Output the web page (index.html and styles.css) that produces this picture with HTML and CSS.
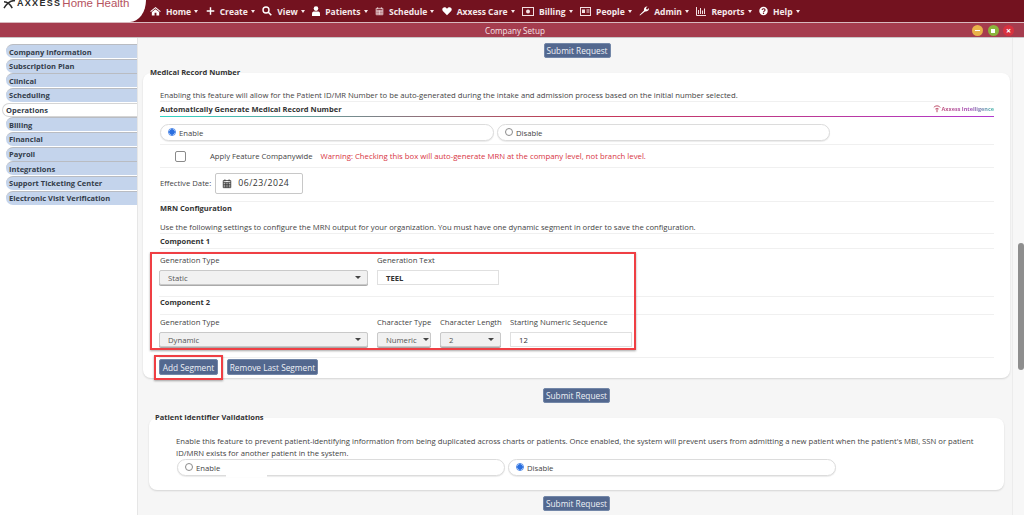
FILE: index.html
```html
<!DOCTYPE html>
<html lang="en">
<head>
<meta charset="utf-8">
<title>Company Setup</title>
<link rel="stylesheet" href="styles.css">
</head>
<body>
<svg class="defs" width="0" height="0" aria-hidden="true">
  <symbol id="i-cal" viewBox="0 0 12 12"><path d="M1.500 2.500h9v8.500h-9z M1.500 5h9 M3.500 1v2.500 M8.500 1v2.500 M4 5v6 M6 5v6 M8 5v6 M1.500 7h9 M1.500 9h9" fill="none" stroke="currentColor" stroke-width="1"/></symbol>
</svg>
<header class="topbar">
  <div class="logo">
    <svg class="logo-mark" viewBox="0 0 16 12" width="15" height="11"><path d="M14 2C9 1 5 5 2 10M2 3c4 0 7 3 9 7" fill="none" stroke="#2b2b2b" stroke-width="1.600"/></svg>
    <span class="logo-axxess">AXXESS</span><span class="logo-hh">Home Health</span>
  </div>
  <nav class="menu">
    <a class="menu-item"><svg viewBox="0 0 12 10" width="11" height="10"><path d="M6 .5L.3 5.300l.7.7L6 2l5 4 .7-.7zM2 6.200V10h3V7h2v3h3V6.200L6 3z" fill="#fff"/></svg>Home<i class="caret"></i></a>
    <a class="menu-item"><svg viewBox="0 0 10 10" width="9" height="10"><path d="M5 .8v8.400M.8 5h8.400" stroke="#fff" stroke-width="1.600"/></svg>Create<i class="caret"></i></a>
    <a class="menu-item"><svg viewBox="0 0 10 10" width="10" height="10"><circle cx="4" cy="4" r="3" fill="none" stroke="#fff" stroke-width="1.400"/><path d="M6.300 6.300l3 3" stroke="#fff" stroke-width="1.600"/></svg>View<i class="caret"></i></a>
    <a class="menu-item"><svg viewBox="0 0 8 10" width="8" height="10"><circle cx="4" cy="2.600" r="2.300" fill="#fff"/><path d="M0 10V7.400C0 6 1.200 5.400 2.200 5.400h3.600C6.800 5.400 8 6 8 7.400V10z" fill="#fff"/></svg>Patients<i class="caret"></i></a>
    <a class="menu-item"><svg class="ic-light" width="9" height="10"><use href="#i-cal"/></svg>Schedule<i class="caret"></i></a>
    <a class="menu-item"><svg viewBox="0 0 12 10" width="10" height="10"><path d="M6 10L1 5C-.5 3 .8.5 3 .5 4.400.5 5.400 1.300 6 2.200 6.600 1.300 7.600.5 9 .5c2.200 0 3.500 2.500 2 4.500z" fill="#fff"/></svg>Axxess Care<i class="caret"></i></a>
    <a class="menu-item"><svg viewBox="0 0 12 9" width="12" height="9"><rect x=".5" y=".5" width="11" height="8" fill="none" stroke="#f3dfe2"/><circle cx="6" cy="4.500" r="2" fill="#f3dfe2"/></svg>Billing<i class="caret"></i></a>
    <a class="menu-item"><svg viewBox="0 0 11 9" width="11" height="9"><rect x=".5" y=".5" width="10" height="8" fill="none" stroke="#f3dfe2"/><rect x="2" y="2.500" width="3" height="3.500" fill="#f3dfe2"/><path d="M6.500 3h3M6.500 5h3" stroke="#f3dfe2"/></svg>People<i class="caret"></i></a>
    <a class="menu-item"><svg viewBox="0 0 10 10" width="10" height="10"><path d="M1 9.500L.5 9 5 4.500C4.500 2.500 6 .2 8.500.5L7 2l.3 1.200L8.500 3.500 10 2c.3 2.500-2 4-4 3.500z" fill="#fff"/></svg>Admin<i class="caret"></i></a>
    <a class="menu-item"><svg viewBox="0 0 10 9" width="10" height="9"><path d="M.5 0v8.500H10" fill="none" stroke="#f3dfe2"/><path d="M2.500 3v4M4.500 1v6M6.500 3.500V7M8.500 1.500V7" stroke="#f3dfe2"/></svg>Reports<i class="caret"></i></a>
    <a class="menu-item"><svg viewBox="0 0 10 10" width="9" height="10"><circle cx="5" cy="5" r="4.700" fill="#fff"/><path d="M3.400 4c0-2.100 3.300-2.100 3.300-.1 0 1.200-1.700 1.200-1.700 2.400" fill="none" stroke="#73121f" stroke-width="1.200"/><rect x="4.300" y="7" width="1.400" height="1.300" fill="#73121f"/></svg>Help<i class="caret"></i></a>
  </nav>
</header>
<div class="titlebar">
  <span class="title">Company Setup</span>
  <div class="win-btns">
    <span class="win win-min"><i class="g-min"></i></span>
    <span class="win win-max"><i class="g-max"></i></span>
    <span class="win win-close">×</span>
  </div>
</div>
<div class="workspace">
  <aside class="sidebar">
    <a class="tab">Company Information</a>
    <a class="tab">Subscription Plan</a>
    <a class="tab">Clinical</a>
    <a class="tab">Scheduling</a>
    <a class="tab tab-active">Operations</a>
    <a class="tab">Billing</a>
    <a class="tab">Financial</a>
    <a class="tab">Payroll</a>
    <a class="tab">Integrations</a>
    <a class="tab">Support Ticketing Center</a>
    <a class="tab">Electronic Visit Verification</a>
  </aside>
  <main class="content">
    <div class="submit-row submit-first"><button class="btn btn-submit">Submit Request</button></div>

    <section class="card card-mrn">
      <h2 class="card-title">Medical Record Number</h2>
      <p class="text t-intro">Enabling this feature will allow for the Patient ID/MR Number to be auto-generated during the intake and admission process based on the initial number selected.</p>
      <div class="ai-row">
        <strong class="heading">Automatically Generate Medical Record Number</strong>
        <span class="ai-brand"><svg viewBox="0 0 10 10" width="8" height="8"><path d="M1 3c2-2.500 6-2.500 8 0M3 5c1.500-1 3-1 4 0M5 5v4" fill="none" stroke="#b9405d" stroke-width="1.200"/></svg>Axxess Intelligence</span>
      </div>
      <div class="radio-row">
        <label class="pill pill-a"><i class="radio radio-on"></i>Enable</label>
        <label class="pill pill-b"><i class="radio"></i>Disable</label>
      </div>
      <div class="apply-row">
        <i class="check"></i>
        <span class="text apply-label">Apply Feature Companywide</span>
        <span class="warning">Warning: Checking this box will auto-generate MRN at the company level, not branch level.</span>
      </div>
      <div class="date-row">
        <span class="text">Effective Date:</span>
        <div class="date-input"><svg width="10" height="11"><use href="#i-cal"/></svg>06/23/2024</div>
      </div>
      <strong class="heading h-config">MRN Configuration</strong>
      <p class="text t-config">Use the following settings to configure the MRN output for your organization. You must have one dynamic segment in order to save the configuration.</p>
      <strong class="heading h-comp1">Component 1</strong>
      <div class="fields fields-1">
        <div class="field f-type"><span class="text">Generation Type</span><div class="select"><span>Static</span><i class="sel-caret"></i></div></div>
        <div class="field f-gentext"><span class="text">Generation Text</span><div class="input input-bold">TEEL</div></div>
      </div>
      <strong class="heading h-comp2">Component 2</strong>
      <div class="fields fields-2">
        <div class="field f-type"><span class="text">Generation Type</span><div class="select"><span>Dynamic</span><i class="sel-caret"></i></div></div>
        <div class="field f-chartype"><span class="text">Character Type</span><div class="select sel-tight"><span>Numeric</span><i class="sel-caret"></i></div></div>
        <div class="field f-charlen"><span class="text">Character Length</span><div class="select"><span>2</span><i class="sel-caret"></i></div></div>
        <div class="field f-seq"><span class="text">Starting Numeric Sequence</span><div class="input">12</div></div>
      </div>
      <div class="seg-row">
        <button class="btn btn-add">Add Segment</button>
        <button class="btn btn-remove">Remove Last Segment</button>
      </div>
      <div class="mark mark-fields"></div>
      <div class="mark mark-add"></div>
    </section>

    <div class="submit-row submit-mid"><button class="btn btn-submit">Submit Request</button></div>

    <section class="card card-piv">
      <h2 class="card-title">Patient Identifier Validations</h2>
      <p class="text t-piv">Enable this feature to prevent patient-identifying information from being duplicated across charts or patients. Once enabled, the system will prevent users from admitting a new patient when the patient's MBI, SSN or patient ID/MRN exists for another patient in the system.</p>
      <div class="radio-row">
        <label class="pill pill-a"><i class="radio"></i>Enable<span class="pill-gap"></span></label>
        <label class="pill pill-b"><i class="radio radio-on"></i>Disable</label>
      </div>
    </section>

    <div class="submit-row submit-last"><button class="btn btn-submit">Submit Request</button></div>
  </main>
  <div class="scrollbar"><div class="thumb"></div></div>
</div>
</body>
</html>
```
FILE: styles.css
```css
* { box-sizing: border-box; }
html, body { height: 100%; }
body {
  margin: 0;
  height: 515px;
  overflow: hidden;
  display: flex;
  flex-direction: column;
  background: #fff;
  color: #3a3a3a;
  font-family: "Open Sans", "Liberation Sans", sans-serif;
  font-size: 7.700px;
}
.defs { position: absolute; }
.topbar {
  height: 23px;
  flex: none;
  display: flex;
  background: #73121f;
  border-bottom: 1px solid #d9b9be;
}
.logo {
  width: 146px;
  height: 22px;
  padding-left: 2px;
  display: flex;
  align-items: flex-start;
  background: #fff;
  border-bottom-right-radius: 16px 22px;
}
.logo-mark { margin-top: -1px; }
.logo-axxess {
  font-family: "Liberation Sans", sans-serif;
  font-weight: 700;
  font-size: 9px;
  letter-spacing: 1.300px;
  color: #2b2b2b;
  line-height: 6px;
  margin-right: 1px;
}
.logo-hh {
  font-family: "Liberation Sans", sans-serif;
  font-size: 11.500px;
  line-height: 7px;
  color: #b5535f;
}
.menu {
  display: flex;
  align-items: center;
  padding-left: 4px;
  height: 22px;
  gap: 7.500px;
}
.menu-item {
  display: flex;
  align-items: center;
  gap: 5px;
  color: #f6e9eb;
  font-weight: 700;
  font-size: 8.500px;
}
.ic-light { color: #f3dfe2; }
.caret {
  width: 0;
  height: 0;
  margin-left: -2px;
  border: 2.500px solid transparent;
  border-top: 3px solid #f6e9eb;
  border-bottom: 0;
}
.titlebar {
  height: 15px;
  flex: none;
  position: relative;
  display: flex;
  align-items: center;
  justify-content: center;
  padding-left: 6px;
  background: #a53c4e;
  color: #f6e6e8;
  font-size: 8.100px;
  border-bottom: 1px solid #c9c5c6;
}
.win-btns {
  position: absolute;
  right: 10px;
  top: 2px;
  display: flex;
  gap: 4.500px;
}
.win {
  width: 11px;
  height: 11px;
  border-radius: 50%;
  display: flex;
  align-items: center;
  justify-content: center;
  color: #fff;
  font-size: 9px;
  font-weight: 700;
  line-height: 1;
}
.win-min { background: #e9b34a; }
.win-max { background: #8bb43c; }
.win-close { background: #d8323f; }
.g-min { width: 5px; height: 1px; background: #fff; }
.g-max { width: 4px; height: 4px; background: #fff; }
.workspace { flex: 1; min-height: 0; display: flex; }
.sidebar {
  width: 138px;
  flex: none;
  padding: 6px 0 0 2px;
  display: flex;
  flex-direction: column;
  gap: 0.670px;
  background: #fff;
  border-right: 1px solid #e6e6e6;
}
.tab {
  height: 14px;
  margin-left: 4px;
  padding-left: 3px;
  display: flex;
  align-items: center;
  background: #c4d4ec;
  border-radius: 7px 0 0 7px;
  border-top: 1px solid #b9bcc2;
  color: #333c4a;
  font-weight: 700;
  font-size: 7.500px;
  white-space: nowrap;
}
.tab-active {
  margin-left: 0;
  padding-left: 3px;
  background: #fff;
  border: 1px solid #d5d5d5;
  border-right: 0;
  color: #333c4a;
}
.content {
  flex: 1;
  min-width: 0;
  height: 477px;
  overflow: hidden;
  padding: 5px 0 0 5px;
  background: #f6f6f6;
}
.submit-row { display: flex; justify-content: center; }
.submit-first { padding-right: 1px; height: 30px; }
.submit-mid { margin-top: 10px; height: 30px; padding-right: 2px; }
.submit-last { margin-top: 6px; padding-right: 2px; }
.btn {
  height: 15px;
  padding: 0 4px;
  font: inherit;
  font-size: 8.300px;
  color: #eef1f6;
  background: #53688f;
  border: 1px solid #7387a8;
  border-radius: 2px;
  white-space: nowrap;
}
.btn-submit { width: 67px; padding: 0; }
.card {
  position: relative;
  background: #fff;
  border-radius: 8px;
  box-shadow: 0 1px 2px rgba(0, 0, 0, .14);
}
.card-mrn {
  width: 867px;
  height: 305px;
  padding: 17px 16px 0 17px;
}
.card-piv {
  width: 855px;
  height: 72px;
  margin-left: 6px;
  padding: 17px 28px 0 27px;
}
.card-title {
  position: absolute;
  top: -6px;
  left: 7px;
  margin: 0;
  font-size: 7.500px;
  font-weight: 700;
  color: #333;
}
.card-piv .card-title { left: 6px; top: -6px; }
.text { font-size: 7.700px; color: #444; white-space: nowrap; }
.t-intro {
  margin: 0;
  height: 12px;
  line-height: 11px;
  border-bottom: 1px solid #f0f0f0;
}
.ai-row {
  height: 15px;
  display: flex;
  justify-content: space-between;
  align-items: center;
  border-bottom: 1px solid;
  border-image: linear-gradient(90deg, #2fd6c4 0, #c83650 50%, #b13ad0 100%) 1;
}
.heading { font-size: 7.500px; font-weight: 700; color: #333; display: block; }
.ai-brand {
  display: flex;
  align-items: center;
  gap: 1px;
  font-size: 5.500px;
  font-weight: 700;
  background: linear-gradient(90deg, #c8506a, #a24bb5 60%, #3fb7a8);
  -webkit-background-clip: text;
  background-clip: text;
  color: transparent;
}
.radio-row { display: flex; gap: 3px; padding-top: 7px; }
.pill {
  position: relative;
  height: 17px;
  display: flex;
  align-items: center;
  padding-left: 7px;
  gap: 3px;
  background: #fff;
  border: 1px solid #dcdcdc;
  border-radius: 9px;
  box-shadow: 0 1px 1px rgba(0, 0, 0, .08);
  font-size: 7.700px;
  color: #444;
}
.pill-a { width: 334px; }
.pill-b { width: 333px; }
.radio {
  width: 8px;
  height: 8px;
  flex: none;
  border-radius: 50%;
  border: 1px solid #8b8b8b;
  background: #fff;
  margin-top: -2px;
}
.radio-on {
  border-color: #4a86e8;
  background: radial-gradient(circle, #2a6fe0 0 2.500px, #fff 3px);
}
.apply-row {
  height: 24px;
  margin-top: 3px;
  display: flex;
  align-items: center;
  border-top: 1px solid #f0f0f0;
  border-bottom: 1px solid #f0f0f0;
  padding-left: 15px;
}
.check {
  width: 11px;
  height: 11px;
  border: 1px solid #8a8a8a;
  border-radius: 2px;
  background: #fff;
}
.apply-label { margin-left: 24px; }
.warning { margin-left: 8px; font-size: 7.750px; color: #d8343f; white-space: nowrap; }
.date-row {
  height: 34px;
  padding-bottom: 3px;
  display: flex;
  align-items: center;
  gap: 4px;
  border-bottom: 1px solid #f0f0f0;
}
.date-input {
  width: 88px;
  height: 21px;
  display: flex;
  align-items: center;
  gap: 6px;
  padding-left: 6px;
  border: 1px solid #c8c8c8;
  border-radius: 2px;
  font-size: 8.700px;
  letter-spacing: .5px;
  color: #333;
}
.h-config { margin-top: 1px; line-height: 10px; }
.t-config {
  margin: 9px 0 0;
  line-height: 10px;
  padding-bottom: 1px;
  border-bottom: 1px solid #f0f0f0;
}
.h-comp1 {
  line-height: 14px;
  height: 15px;
  border-bottom: 1px solid #f0f0f0;
}
.fields { display: flex; gap: 9px; margin-left: -1px; }
.fields-1 { padding-top: 6px; height: 48px; border-bottom: 1px solid #f0f0f0; }
.fields-2 { padding-top: 2px; height: 43px; border-bottom: 1px solid #f0f0f0; }
.h-comp2 { height: 18px; line-height: 10px; border-bottom: 1px solid #f0f0f0; }
.field { display: flex; flex-direction: column; gap: 5px; }
.field > .text { line-height: 10px; }
.f-type > .text { padding-left: 1px; }
.f-type { width: 209px; }
.f-gentext { width: 122px; }
.f-chartype { width: 54px; }
.f-charlen { width: 61px; }
.f-seq { width: 122px; }
.select {
  height: 15px;
  display: flex;
  align-items: center;
  justify-content: space-between;
  padding: 0 6px 0 8px;
  background: #f1f1f1;
  border: 1px solid #c9c9c9;
  border-radius: 2px;
  box-shadow: 0 1px 0 #aaa;
  font-size: 7.700px;
  color: #555;
}
.sel-tight { padding: 0 1px 0 8px; }
.sel-caret {
  width: 0;
  height: 0;
  border: 3px solid transparent;
  border-top: 3px solid #444;
  border-bottom: 0;
}
.input {
  height: 15px;
  display: flex;
  align-items: center;
  padding-left: 8px;
  border: 1px solid #e0e0e0;
  font-size: 7.700px;
  color: #333;
}
.input-bold { font-weight: 700; }
.seg-row { display: flex; gap: 9px; padding-top: 1px; margin-left: -1px; }
.seg-row .btn { height: 16px; }
.btn-add { width: 59px; padding: 0; }
.btn-remove { width: 91px; padding: 0; }
.mark {
  position: absolute;
  border: 2px solid #ef3f44;
  box-shadow: 0 1px 2px rgba(0, 0, 0, .35);
  pointer-events: none;
}
.mark-fields { left: 7px; top: 179px; width: 486px; height: 98px; }
.mark-add { left: 11px; top: 282px; width: 69px; height: 25px; }
.t-piv {
  margin: 0;
  line-height: 12px;
  white-space: normal;
}
.card-piv .radio-row { padding: 0 0 0 1px; gap: 3px; }
.card-piv .pill-a { width: 328px; }
.card-piv .pill-b { width: 328px; }
.pill-gap {
  position: absolute;
  left: 48px;
  bottom: -2px;
  width: 41px;
  height: 3px;
  background: #fff;
}
.scrollbar {
  width: 12px;
  flex: none;
  position: relative;
  background: #f7f7f7;
  border-left: 1px solid #ececec;
}
.thumb {
  position: absolute;
  right: 0;
  top: 205px;
  width: 6px;
  height: 127px;
  background: #8e8e8e;
  border-radius: 3px;
}
```
